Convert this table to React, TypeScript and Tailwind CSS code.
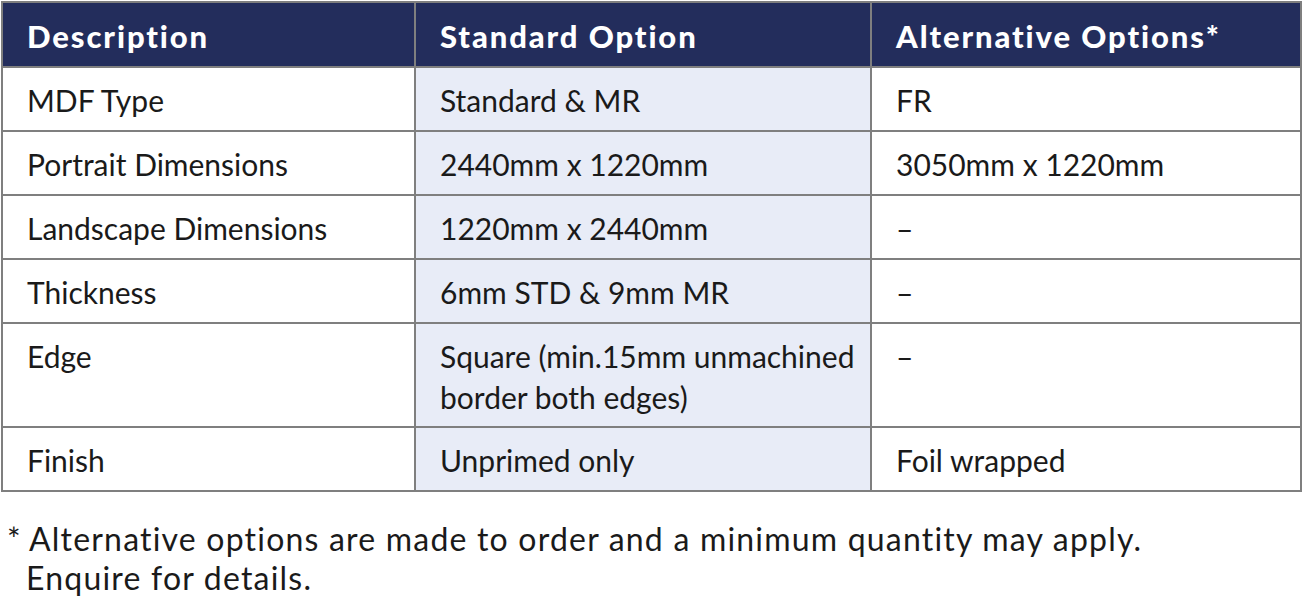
export default function App() {
  const rows: { desc: string; std: string[]; alt: string; tall?: boolean }[] = [
    { desc: 'MDF Type', std: ['Standard & MR'], alt: 'FR' },
    { desc: 'Portrait Dimensions', std: ['2440mm x 1220mm'], alt: '3050mm x 1220mm' },
    { desc: 'Landscape Dimensions', std: ['1220mm x 2440mm'], alt: '–' },
    { desc: 'Thickness', std: ['6mm STD & 9mm MR'], alt: '–' },
    { desc: 'Edge', std: ['Square (min.15mm unmachined', 'border both edges)'], alt: '–', tall: true },
    { desc: 'Finish', std: ['Unprimed only'], alt: 'Foil wrapped' },
  ];

  return (
    <div
      className="w-[1303px] h-[598px] bg-white text-[#1a1a1a] overflow-hidden"
      style={{ fontFamily: 'Lato, "Open Sans", sans-serif' }}
    >
      <div className="ml-px mt-px w-[1301px] grid grid-cols-[411px_454px_428px] gap-[2px] p-[2px] bg-[#7f7f7f] text-[30px] leading-[41px]">
        {/* header */}
        <div className="h-[63px] bg-[#232d5c] text-white font-black text-[31px] tracking-[1.9px] px-6 pt-[13px] whitespace-nowrap">Description</div>
        <div className="h-[63px] bg-[#232d5c] text-white font-black text-[31px] tracking-[1.9px] px-6 pt-[13px] whitespace-nowrap">Standard Option</div>
        <div className="h-[63px] bg-[#232d5c] text-white font-black text-[31px] tracking-[1.9px] px-6 pt-[13px] whitespace-nowrap">Alternative Options*</div>

        {rows.map((r) => {
          const h = r.tall ? 'h-[102px]' : 'h-[62px]';
          return [
            <div key={r.desc + 'a'} className={`${h} bg-white px-6 pt-[12px] whitespace-nowrap`}>{r.desc}</div>,
            <div key={r.desc + 'b'} className={`${h} bg-[#e8ecf7] px-6 pt-[12px] whitespace-nowrap`}>
              {r.std.map((s) => (
                <div key={s}>{s}</div>
              ))}
            </div>,
            <div key={r.desc + 'c'} className={`${h} bg-white px-6 pt-[12px] whitespace-nowrap`}>{r.alt}</div>,
          ];
        })}
      </div>

      <div className="mt-[27px] flex text-[32px] leading-[39px] tracking-[1.2px] pl-[7px]">
        <span className="w-[22px] shrink-0">*</span>
        <div className="whitespace-nowrap">
          <div>Alternative options are made to order and a minimum quantity may apply.</div>
          <div className="-ml-[3px]">Enquire for details.</div>
        </div>
      </div>
    </div>
  );
}
